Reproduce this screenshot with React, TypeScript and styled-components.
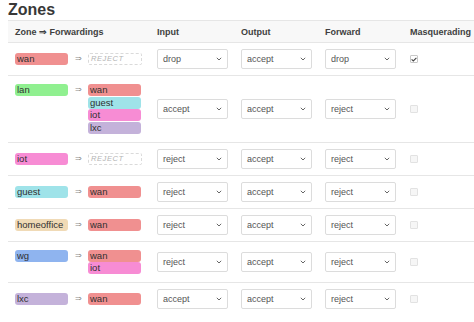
import styled, { createGlobalStyle } from 'styled-components'

const GlobalStyle = createGlobalStyle`
  body {
    margin: 0;
    background: #fff;
    font-family: "Liberation Sans", Arial, sans-serif;
    color: #333;
  }
`

const Page = styled.div`
  padding: 0 0 0 8px;
`

const Title = styled.h3`
  margin: 0;
  height: 20px;
  font-size: 16px;
  line-height: 20px;
  font-weight: bold;
  color: #383838;
`

const Table = styled.table`
  width: 466px;
  border-collapse: collapse;
  table-layout: fixed;
`

const HeadCell = styled.th<{ $w: number }>`
  box-sizing: border-box;
  width: ${(p) => p.$w}px;
  height: 22px;
  padding: 0 6px 0 7px;
  text-align: left;
  font-size: 9px;
  font-weight: bold;
  color: #404040;
  background: #f8f8f8;
  border-top: 1px solid #e6e6e6;
  border-bottom: 1px solid #e6e6e6;
  white-space: nowrap;
`

const Row = styled.tr`
  border-bottom: 1px solid #e6e6e6;
  &:last-child {
    border-bottom: none;
  }
`

const Cell = styled.td<{ $zone?: boolean }>`
  padding: ${(p) => (p.$zone ? '8px 7px' : '6px 7px')};
  vertical-align: middle;
`

const ZoneFlow = styled.div`
  display: flex;
  align-items: flex-start;
`

const Badge = styled.div<{ $color: string }>`
  width: 53px;
  height: 12px;
  box-sizing: border-box;
  padding-left: 2px;
  border-radius: 3px;
  background: ${(p) => p.$color};
  font-size: 9.5px;
  line-height: 12px;
  color: #303030;
  white-space: nowrap;
  overflow: hidden;
`

const Arrow = styled.span`
  width: 20px;
  flex: none;
  text-align: center;
  font-size: 8px;
  line-height: 12px;
  color: #8a8a8a;
`

const Targets = styled.div`
  display: flex;
  flex-direction: column;
  gap: 0.5px;
`

const Reject = styled.div`
  width: 54px;
  height: 12px;
  box-sizing: border-box;
  padding-left: 2px;
  border: 1px dashed #dadada;
  border-radius: 2px;
  font-size: 7.5px;
  font-style: italic;
  letter-spacing: 0.6px;
  line-height: 10px;
  color: #b4b4b4;
`

const Select = styled.div`
  width: 71px;
  height: 20px;
  box-sizing: border-box;
  display: flex;
  align-items: center;
  justify-content: space-between;
  padding: 0 5px;
  border: 1px solid #dcdcdc;
  border-radius: 2px;
  background: #fff;
  font-size: 9px;
  color: #555;
`

const Check = styled.div<{ $on: boolean }>`
  width: 8px;
  height: 8px;
  box-sizing: border-box;
  border: 1px solid ${(p) => (p.$on ? '#c8c8c8' : '#e2e2e2')};
  border-radius: 1px;
  background: ${(p) => (p.$on ? '#fff' : '#f6f6f6')};
  display: flex;
  align-items: center;
  justify-content: center;
`

const colors: Record<string, string> = {
  wan: '#f09090',
  lan: '#90f090',
  guest: '#9fe3e9',
  iot: '#f78cd4',
  lxc: '#c4b2da',
  homeoffice: '#f0dab6',
  wg: '#8fb4ef',
}

type Zone = {
  name: string
  fwd: string[]
  input: string
  output: string
  forward: string
  masq: boolean
}

const zones: Zone[] = [
  { name: 'wan', fwd: [], input: 'drop', output: 'accept', forward: 'drop', masq: true },
  { name: 'lan', fwd: ['wan', 'guest', 'iot', 'lxc'], input: 'accept', output: 'accept', forward: 'reject', masq: false },
  { name: 'iot', fwd: [], input: 'reject', output: 'accept', forward: 'reject', masq: false },
  { name: 'guest', fwd: ['wan'], input: 'reject', output: 'accept', forward: 'reject', masq: false },
  { name: 'homeoffice', fwd: ['wan'], input: 'reject', output: 'accept', forward: 'reject', masq: false },
  { name: 'wg', fwd: ['wan', 'iot'], input: 'reject', output: 'accept', forward: 'reject', masq: false },
  { name: 'lxc', fwd: ['wan'], input: 'accept', output: 'accept', forward: 'reject', masq: false },
]

const Chevron = () => (
  <svg width="6" height="4" viewBox="0 0 6 4">
    <polyline points="0.8,0.8 3,3 5.2,0.8" fill="none" stroke="#666" strokeWidth="1" />
  </svg>
)

const PolicySelect = ({ value }: { value: string }) => (
  <Select>
    <span>{value}</span>
    <Chevron />
  </Select>
)

export default function App() {
  return (
    <Page>
      <GlobalStyle />
      <Title>Zones</Title>
      <Table>
        <thead>
          <tr>
            <HeadCell $w={142}>Zone ⇒ Forwardings</HeadCell>
            <HeadCell $w={84}>Input</HeadCell>
            <HeadCell $w={84}>Output</HeadCell>
            <HeadCell $w={85}>Forward</HeadCell>
            <HeadCell $w={71}>Masquerading</HeadCell>
          </tr>
        </thead>
        <tbody>
          {zones.map((z) => (
            <Row key={z.name}>
              <Cell $zone>
                <ZoneFlow>
                  <Badge $color={colors[z.name]}>{z.name}</Badge>
                  <Arrow>⇒</Arrow>
                  <Targets>
                    {z.fwd.length === 0 ? (
                      <Reject>REJECT</Reject>
                    ) : (
                      z.fwd.map((f) => (
                        <Badge key={f} $color={colors[f]}>
                          {f}
                        </Badge>
                      ))
                    )}
                  </Targets>
                </ZoneFlow>
              </Cell>
              <Cell>
                <PolicySelect value={z.input} />
              </Cell>
              <Cell>
                <PolicySelect value={z.output} />
              </Cell>
              <Cell>
                <PolicySelect value={z.forward} />
              </Cell>
              <Cell>
                <Check $on={z.masq}>
                  {z.masq && (
                    <svg width="6" height="5" viewBox="0 0 6 5">
                      <polyline points="0.6,2.4 2.3,4 5.4,0.8" fill="none" stroke="#444" strokeWidth="1.1" />
                    </svg>
                  )}
                </Check>
              </Cell>
            </Row>
          ))}
        </tbody>
      </Table>
    </Page>
  )
}
